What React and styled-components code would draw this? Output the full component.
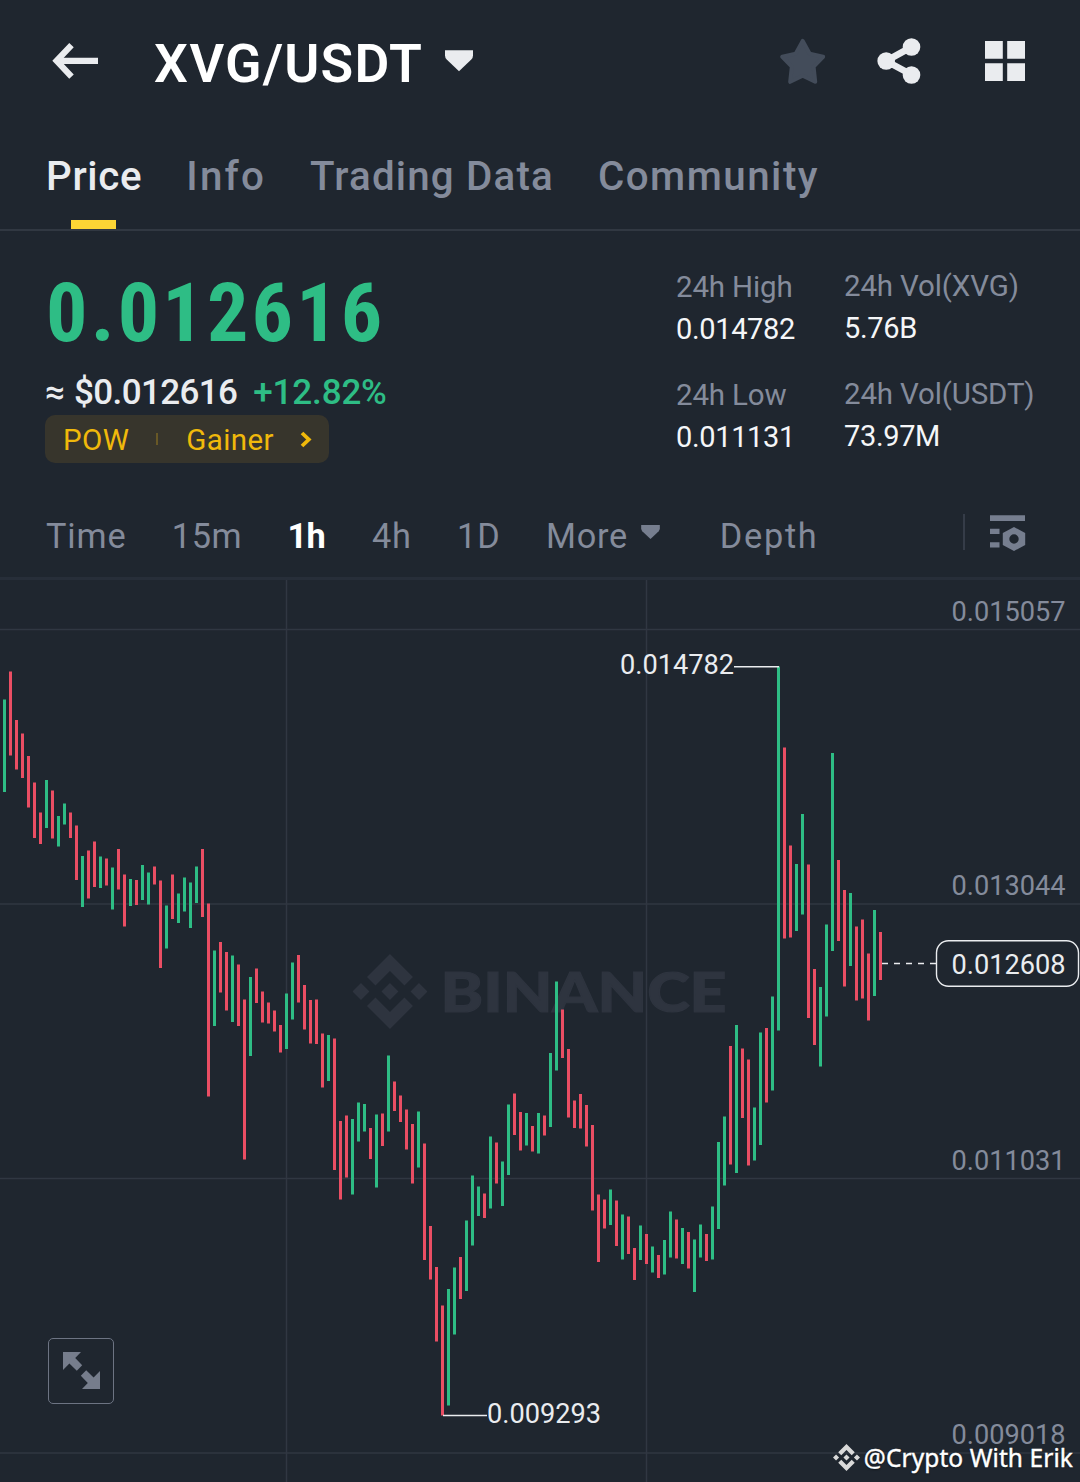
import React, { useState } from 'react';
import styled, { createGlobalStyle } from 'styled-components';
import { SiBinance } from 'react-icons/si';

const GREEN = '#2ebd85';
const RED = '#ea4e64';
const GREY = '#848b9b';

const GlobalStyle = createGlobalStyle`
  body {
    margin: 0;
    background: #1f262f;
  }
`;

const Page = styled.div`
  display: flex;
  flex-direction: column;
  width: 1080px;
  height: 1482px;
  overflow: hidden;
  background: #1f262f;
  color: #eaecef;
  font-family: Roboto, 'Liberation Sans', sans-serif;
  white-space: nowrap;
`;

const TopBar = styled.header`
  display: flex;
  align-items: center;
  justify-content: space-between;
  height: 122px;
  padding: 0 55px 0 52px;
`;
const Pair = styled.div`
  display: flex;
  align-items: center;
`;
const Title = styled.h1`
  margin: 5px 22px 0 56px;
  font-size: 53.5px;
  line-height: 60px;
  font-weight: 600;
  letter-spacing: 1.2px;
  color: #fff;
`;
const Actions = styled.div`
  display: flex;
  align-items: center;

  svg + svg {
    margin-left: 51px;
  }
  svg:last-child {
    margin-left: 64px;
  }
`;

const Tabs = styled.nav`
  display: flex;
  gap: 44px;
  height: 107px;
  padding-left: 46px;
  border-bottom: 2px solid #313842;
`;
const Tab = styled.div`
  display: flex;
  flex-direction: column;
  align-items: center;
  padding-top: 31px;
  font-size: 40.3px;
  line-height: 48px;
  font-weight: 500;
  letter-spacing: ${p => p.$spacing || 1.17}px;
  color: ${p => (p.$active ? '#eaecef' : GREY)};
`;
const Underline = styled.div`
  width: 45px;
  height: 9px;
  margin: auto 2px 0 0;
  background: #fcd535;
`;

const Summary = styled.section`
  display: flex;
  justify-content: space-between;
  height: 265px;
`;
const PriceBlock = styled.div`
  display: flex;
  flex-direction: column;
  align-items: flex-start;
  padding: 37px 0 0 45px;
`;
const Price = styled.div`
  font-size: 82px;
  line-height: 90px;
  font-weight: 700;
  font-stretch: 75%;
  letter-spacing: 3.2px;
  margin: 0 0 13px 1px;
  color: ${GREEN};
`;
const SubPrice = styled.div`
  display: flex;
  font-size: 35px;
  line-height: 44px;
  font-weight: 500;
`;
const Approx = styled.span`
  width: 29px;
`;
const Fiat = styled.span`
  letter-spacing: -0.62px;
`;
const Change = styled.span`
  margin-left: 16px;
  letter-spacing: -0.15px;
  color: ${GREEN};
`;
const Badge = styled.div`
  display: flex;
  align-items: center;
  box-sizing: border-box;
  width: 284px;
  height: 48px;
  padding: 2px 17px 0 18px;
  border-radius: 10px;
  background: #37352c;
  font-size: 29.5px;
  line-height: 46px;
  letter-spacing: 0.4px;
  color: #f0b90b;

  svg {
    margin: -2px 0 0 auto;
  }
`;
const BadgeDivider = styled.i`
  width: 2px;
  height: 12px;
  margin: -3px 28px 0 27px;
  background: #685826;
`;

const Stats = styled.div`
  display: flex;
  padding-top: 35px;
`;
const StatColumn = styled.div`
  display: flex;
  flex-direction: column;
  gap: 24px;
  width: ${p => p.$width}px;
  margin-top: ${p => p.$shift || 0}px;
`;
const StatLabel = styled.div`
  font-size: 29.5px;
  line-height: 42px;
  letter-spacing: -0.15px;
  color: ${GREY};
`;
const StatValue = styled.div`
  font-size: 29px;
  line-height: 42px;
  letter-spacing: -0.35px;
  color: #f5f6f8;
`;

const Intervals = styled.div`
  display: flex;
  align-items: center;
  justify-content: space-between;
  height: 79px;
  padding: 0 54px 2px 46px;
  border-bottom: 3px solid #272e39;
`;
const IntervalList = styled.div`
  display: flex;
  align-items: center;
  gap: 45px;
`;
const Interval = styled.div`
  display: flex;
  align-items: center;
  gap: 13px;
  font-size: 34.3px;
  line-height: 40px;
  font-weight: ${p => (p.$active ? 700 : 400)};
  letter-spacing: ${p => p.$spacing}px;
  margin-right: ${p => p.$after || 0}px;
  color: ${p => (p.$active ? '#fff' : GREY)};

  svg {
    margin-top: -8px;
  }
`;
const ToolDivider = styled.i`
  width: 2px;
  height: 36px;
  margin: -8px 25px 0 0;
  background: #353c48;
`;
const Tools = styled(Pair)`
  svg {
    margin-top: -5px;
  }
`;

const Chart = styled.div`
  position: relative;
  height: 902px;

  > svg {
    display: block;
  }
`;
const ExpandButton = styled.button`
  position: absolute;
  left: 48px;
  top: 758px;
  display: flex;
  align-items: center;
  justify-content: center;
  width: 66px;
  height: 66px;
  padding: 0 0 2px;
  border: 1.5px solid #6d7483;
  border-radius: 5px;
  background: transparent;
`;
const Credit = styled.div`
  position: absolute;
  right: 7px;
  bottom: 11px;
  display: flex;
  align-items: center;
  gap: 4px;
  font-family: 'Noto Sans', sans-serif;
  font-size: 24.5px;
  line-height: 26px;
  letter-spacing: 0.08px;
  color: #fff;
  -webkit-text-stroke: 0.4px #fff;
  text-shadow: 0 1px 2px rgba(0, 0, 0, 0.5);
`;

const tabs = [
  { label: 'Price', spacing: 0.68 },
  { label: 'Info', spacing: 2.2 },
  { label: 'Trading Data' },
  { label: 'Community', spacing: 1.5 },
];

const intervals = [
  { label: 'Time', spacing: 0.9 },
  { label: '15m', spacing: 0.7 },
  { label: '1h', spacing: -0.7, after: 2 },
  { label: '4h', spacing: 0.9 },
  { label: '1D', spacing: 1.2 },
  { label: 'More', spacing: 0.7, caret: true, after: 15 },
  { label: 'Depth', spacing: 1.7 },
];

const stats = [
  {
    width: 168,
    rows: [['24h High', '0.014782'], ['24h Low', '0.011131']],
  },
  {
    width: 236,
    shift: -1,
    rows: [['24h Vol(XVG)', '5.76B'], ['24h Vol(USDT)', '73.97M']],
  },
];

const gridRows = [
  { y: 49.5, price: '0.015057' },
  { y: 324, price: '0.013044' },
  { y: 598.5, price: '0.011031' },
  { y: 873, price: '0.009018' },
];

// [direction, top, bottom], one candle every 6px
const TOP = 580;
const candles = [
  ['g', 699.5, 792], ['r', 671.5, 755.5], ['r', 720, 769.5], ['r', 733.5, 778], ['r', 756, 807.5],
  ['r', 782.5, 838], ['r', 812.5, 844], ['g', 780, 828], ['r', 790.5, 838.5], ['g', 816, 846.5],
  ['g', 803.5, 824.5], ['r', 812.5, 838], ['r', 825.5, 880], ['g', 856, 907], ['r', 850.5, 898.5],
  ['r', 841.5, 887], ['g', 856.5, 888], ['r', 858.5, 885.5], ['g', 867.5, 909.5], ['r', 849, 889.5],
  ['r', 874.5, 926.5], ['g', 879, 906], ['r', 880, 905], ['g', 865, 900], ['g', 872.5, 904.5],
  ['r', 866.5, 884.5], ['r', 880.5, 968], ['g', 905.5, 948.5], ['r', 874.5, 919], ['g', 893.5, 923],
  ['g', 877.5, 911.5], ['g', 882.5, 928], ['g', 866.5, 903], ['r', 849, 917], ['r', 903.5, 1096.5],
  ['g', 950.5, 1026], ['r', 942, 992.5], ['r', 952, 1010.5], ['g', 955.5, 1022], ['r', 964.5, 1026],
  ['r', 999.5, 1159.5], ['g', 977, 1056], ['r', 968.5, 1003], ['r', 991.5, 1022.5], ['r', 1002.5, 1023.5],
  ['r', 1010.5, 1031.5], ['r', 1025, 1052.5], ['g', 993.5, 1049], ['g', 962.5, 1019.5], ['r', 955, 1002.5],
  ['r', 985, 1029.5], ['r', 1000, 1043.5], ['r', 999.5, 1044], ['r', 1033.5, 1087.5], ['g', 1035, 1081],
  ['r', 1038.5, 1170], ['r', 1121, 1199.5], ['r', 1115.5, 1177.5], ['g', 1119, 1194.5], ['g', 1102.5, 1141.5],
  ['g', 1104, 1131.5], ['r', 1128, 1159], ['g', 1114.5, 1187.5], ['r', 1113.5, 1146], ['g', 1055.5, 1131.5],
  ['r', 1081.5, 1111], ['r', 1095.5, 1122], ['r', 1109.5, 1149.5], ['r', 1124, 1183.5], ['g', 1111.5, 1167.5],
  ['r', 1143.5, 1260], ['r', 1226, 1279.5], ['r', 1267, 1341.5], ['r', 1305.5, 1415.5], ['g', 1289, 1405.5],
  ['g', 1267.5, 1334.5], ['r', 1257, 1299], ['g', 1220.5, 1291], ['g', 1175.5, 1245.5], ['g', 1186.5, 1216],
  ['r', 1193.5, 1218], ['g', 1136.5, 1208.5], ['r', 1142.5, 1183.5], ['g', 1161.5, 1206], ['g', 1104.5, 1175],
  ['r', 1093.5, 1135], ['r', 1112, 1150.5], ['g', 1113, 1145.5], ['r', 1126, 1151.5], ['g', 1113, 1153.5],
  ['r', 1115.5, 1135.5], ['g', 1053, 1127], ['g', 981.5, 1070.5], ['r', 1009.5, 1058], ['r', 1049, 1117.5],
  ['r', 1100.5, 1128], ['r', 1094, 1128.5], ['r', 1105, 1146.5], ['r', 1125, 1210.5], ['r', 1194.5, 1262],
  ['r', 1199.5, 1228.5], ['g', 1189.5, 1225], ['r', 1200.5, 1246], ['g', 1214.5, 1259.5], ['r', 1216.5, 1254],
  ['r', 1248, 1280], ['g', 1225.5, 1260], ['r', 1234, 1264], ['g', 1246.5, 1272.5], ['r', 1255, 1278],
  ['g', 1240, 1274.5], ['g', 1211.5, 1257.5], ['r', 1219.5, 1258.5], ['g', 1228, 1264], ['r', 1232, 1268.5],
  ['g', 1239.5, 1292], ['g', 1224.5, 1257.5], ['r', 1234, 1261], ['g', 1206.5, 1259.5], ['g', 1142, 1229],
  ['g', 1116.5, 1185.5], ['r', 1046, 1164.5], ['g', 1025, 1173], ['r', 1048.5, 1118], ['r', 1059.5, 1165.5],
  ['g', 1107.5, 1160.5], ['g', 1032.5, 1145], ['r', 1028, 1102.5], ['g', 996.5, 1090.5], ['g', 666.5, 1030.5],
  ['r', 747.5, 938.5], ['r', 845.5, 937.5], ['g', 864, 931], ['g', 814, 914.5], ['r', 864.5, 1018],
  ['r', 969, 1045], ['g', 987, 1066.5], ['g', 924.5, 1016.5], ['g', 753, 951], ['r', 860, 941],
  ['r', 890, 986.5], ['g', 893, 966], ['r', 926.5, 1000.5], ['r', 919.5, 998.5], ['r', 953.5, 1020.5],
  ['g', 910, 996], ['r', 932, 980],
];

const BackIcon = () => (
  <svg width="46" height="36" viewBox="0 0 46 36" fill="none" stroke="#eaecef" strokeWidth="6.2">
    <path d="M19.5 2.2 4.6 17.8 19.5 33.6" />
    <path d="M5 17.8H46" />
  </svg>
);

const Caret = ({ width, height, color }) => (
  <svg width={width} height={height} viewBox="0 0 28 21">
    <path d="M0 0H28V5Q28 7.4 26.3 9.3L14 21 1.7 9.3Q0 7.4 0 5Z" fill={color} />
  </svg>
);

const StarIcon = () => (
  <svg width="46" height="46" viewBox="0 0 46 46">
    <path
      d="M22.7 2.9 29.7 15.6 43.1 18.8 33.6 28.6 35.2 43.8 22.7 37.8 10.2 43.8 11.8 28.6 2.3 18.8 15.7 15.6Z"
      fill="#434c5a"
      stroke="#434c5a"
      strokeWidth="4"
      strokeLinejoin="round"
    />
  </svg>
);

const ShareIcon = () => (
  <svg width="44" height="46" viewBox="0 0 44 46" fill="#eaecef">
    <path d="M34.5 9 9 23 34.5 36.7" fill="none" stroke="#eaecef" strokeWidth="6.6" />
    <circle cx="34.5" cy="9" r="8.8" />
    <circle cx="9.2" cy="23" r="8.8" />
    <circle cx="34.5" cy="37" r="8.8" />
  </svg>
);

const GridIcon = () => (
  <svg width="40" height="40" viewBox="0 0 40 40" fill="#eaecef">
    <path d="M0 0H17.8V17.8H0ZM22.2 0H40V17.8H22.2ZM0 22.2H17.8V40H0ZM22.2 22.2H40V40H22.2Z" />
  </svg>
);

const ChevronIcon = () => (
  <svg width="12" height="17" viewBox="0 0 12 17">
    <path d="M2 2 8.8 8.5 2 15" fill="none" stroke="#f0b90b" strokeWidth="3.8" />
  </svg>
);

const SettingsIcon = () => (
  <svg width="36" height="38" viewBox="0 0 36 38" fill="#767e8f">
    <path d="M0 1.2H35V7H0ZM0 14.8H9.5V20H0ZM0 28.2H9.5V33.6H0Z" />
    <path
      fillRule="evenodd"
      d="M24 13 35.2 19V31L24 37 12.8 31V19ZM24 20.3A4.7 4.7 0 1 0 24 29.7A4.7 4.7 0 1 0 24 20.3Z"
    />
  </svg>
);

const ExpandIcon = () => (
  <svg width="37" height="37" viewBox="0 0 37 37" fill="#767d8c">
    <path d="M0 0H18L12.2 6 19.2 13.2 13.8 18.8 6.4 11.6 0 18Z" />
    <path d="M37 37H19L24.8 31 17.8 23.8 23.2 18.2 30.6 25.4 37 19Z" />
  </svg>
);

const CandleChart = () => (
  <svg width="1080" height="902" viewBox="0 0 1080 902" fontFamily="Roboto, sans-serif" fontSize="27.2">
    <g fill="#2e343f">
      <SiBinance x="352.5" y="374" size={75} color="#2e343f" />
      <text
        x="440.5"
        y="431.5"
        fontFamily="Lato, sans-serif"
        fontWeight="900"
        fontSize="54.5"
        textLength="286"
        lengthAdjust="spacingAndGlyphs"
        stroke="#2e343f"
        strokeWidth="1.2"
      >
        BINANCE
      </text>
    </g>
    <g stroke="#303742" strokeWidth="1.5">
      <path d="M286.5 0V902M646.5 0V902" />
      {gridRows.map(({ y }) => (
        <path key={y} d={`M0 ${y}H1080`} />
      ))}
    </g>
    <g fill={GREY}>
      {gridRows.map(({ y, price }) => (
        <text key={price} x="951.5" y={y - 9}>{price}</text>
      ))}
    </g>
    {candles.map(([dir, top, bottom], i) => (
      <rect
        key={i}
        x={3 + i * 6}
        y={top - TOP}
        width="3"
        height={bottom - top}
        fill={dir === 'g' ? GREEN : RED}
      />
    ))}
    <g fill="#eaecef">
      <path d="M734 86.8H779M443 835.4H487" stroke="#eaecef" strokeWidth="1.5" />
      <text x="620" y="94">0.014782</text>
      <text x="487" y="842.5">0.009293</text>
    </g>
    <path d="M882 383.5H936" stroke="#eaecef" strokeWidth="1.4" strokeDasharray="6 6" />
    <rect x="936.5" y="360.7" width="142" height="45.5" rx="12" fill="#1f262f" stroke="#eaecef" strokeWidth="1.4" />
    <text x="951.5" y="394" fill="#eaecef">0.012608</text>
  </svg>
);

const App = () => {
  const [tab, setTab] = useState('Price');
  const [interval, setChartInterval] = useState('1h');

  return (
    <Page>
      <GlobalStyle />
      <TopBar>
        <Pair>
          <BackIcon />
          <Title>XVG/USDT</Title>
          <Caret width={28} height={21.5} color="#eaecef" />
        </Pair>
        <Actions>
          <StarIcon />
          <ShareIcon />
          <GridIcon />
        </Actions>
      </TopBar>

      <Tabs>
        {tabs.map(({ label, spacing }) => (
          <Tab key={label} $active={tab === label} $spacing={spacing} onClick={() => setTab(label)}>
            {label}
            {tab === label && <Underline />}
          </Tab>
        ))}
      </Tabs>

      <Summary>
        <PriceBlock>
          <Price>0.012616</Price>
          <SubPrice>
            <Approx>≈</Approx>
            <Fiat>$0.012616</Fiat>
            <Change>+12.82%</Change>
          </SubPrice>
          <Badge>
            <span>POW</span>
            <BadgeDivider />
            <span>Gainer</span>
            <ChevronIcon />
          </Badge>
        </PriceBlock>
        <Stats>
          {stats.map(({ width, shift, rows }) => (
            <StatColumn key={width} $width={width} $shift={shift}>
              {rows.map(([label, value]) => (
                <div key={label}>
                  <StatLabel>{label}</StatLabel>
                  <StatValue>{value}</StatValue>
                </div>
              ))}
            </StatColumn>
          ))}
        </Stats>
      </Summary>

      <Intervals>
        <IntervalList>
          {intervals.map(({ label, spacing, after, caret }) => (
            <Interval
              key={label}
              $active={interval === label}
              $spacing={spacing}
              $after={after}
              onClick={() => setChartInterval(label)}
            >
              {label}
              {caret && <Caret width={19} height={14} color="#767e8f" />}
            </Interval>
          ))}
        </IntervalList>
        <Tools>
          <ToolDivider />
          <SettingsIcon />
        </Tools>
      </Intervals>

      <Chart>
        <CandleChart />
        <ExpandButton>
          <ExpandIcon />
        </ExpandButton>
        <Credit>
          <SiBinance size={27} color="#d9d9d9" />
          @Crypto With Erik
        </Credit>
      </Chart>
    </Page>
  );
};

export default App;
